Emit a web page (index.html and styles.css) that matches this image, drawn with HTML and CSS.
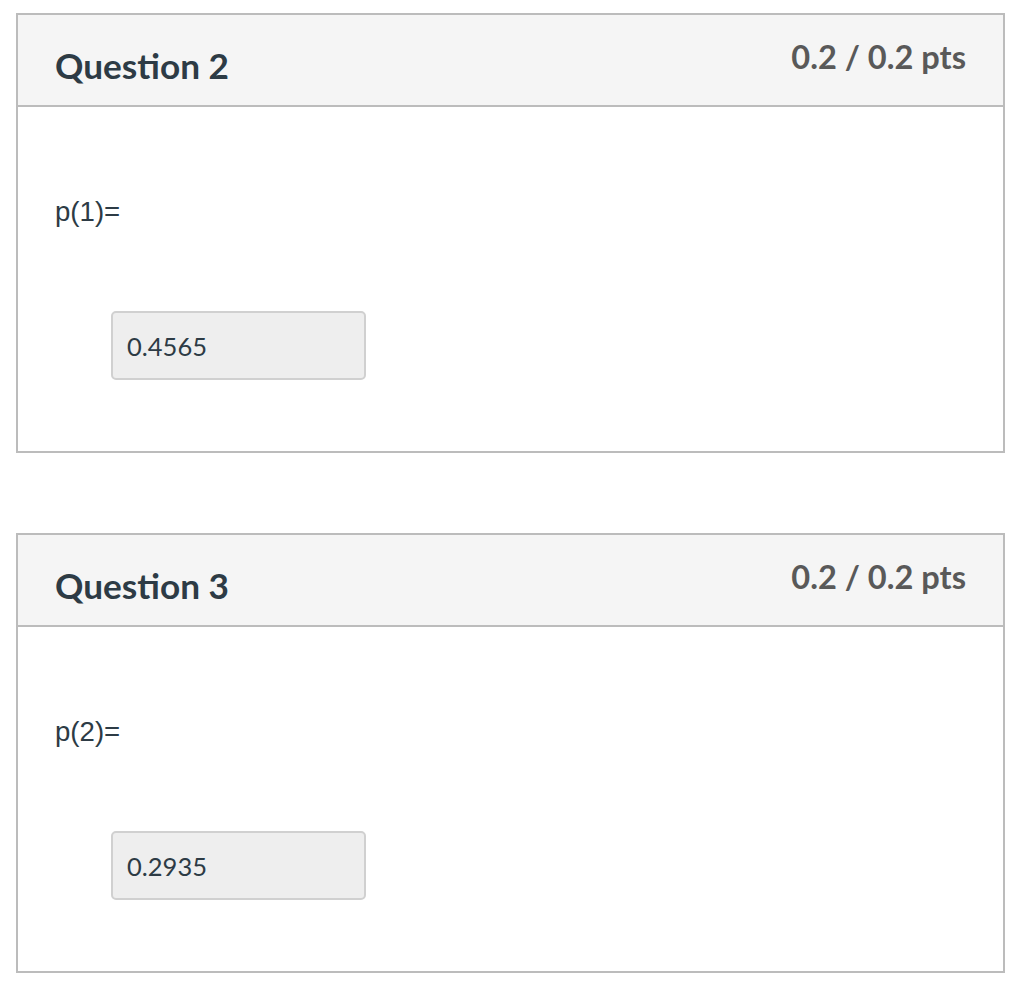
FILE: index.html
```html
<!DOCTYPE html>
<html lang="en">
<head>
<meta charset="utf-8">
<title>Quiz results</title>
<link rel="stylesheet" href="styles.css">
</head>
<body>
  <div class="question">
    <div class="question-header">
      <h2 class="question-name">Question 2</h2>
      <span class="question-points">0.2 / 0.2 pts</span>
    </div>
    <div class="question-body">
      <p class="question-text">p(1)=</p>
      <div class="answer-box">0.4565</div>
    </div>
  </div>
  <div class="question">
    <div class="question-header">
      <h2 class="question-name">Question 3</h2>
      <span class="question-points">0.2 / 0.2 pts</span>
    </div>
    <div class="question-body">
      <p class="question-text">p(2)=</p>
      <div class="answer-box">0.2935</div>
    </div>
  </div>
</body>
</html>
```

FILE: styles.css
```css
html, body {
  background: #ffffff;
}

body {
  margin: 0;
  padding: 13px 0 0 16px;
  display: flex;
  flex-direction: column;
  gap: 80px;
  font-family: Lato, "Liberation Sans", sans-serif;
  color: #2d3b45;
}

.question {
  box-sizing: border-box;
  width: 989px;
  border: 2px solid #bcbcbc;
  background: #ffffff;
}

.question-header {
  box-sizing: border-box;
  height: 92px;
  background: #f5f5f5;
  border-bottom: 2px solid #bcbcbc;
  padding: 0 37px;
  display: flex;
  justify-content: space-between;
  align-items: flex-start;
}

.question-name {
  margin: 29px 0 0 0;
  font-family: Lato, sans-serif;
  font-weight: 700;
  font-size: 35.2px;
  line-height: 43px;
  color: #2d3b45;
}

.question-points {
  margin-top: 23px;
  font-family: Lato, sans-serif;
  font-weight: 700;
  font-size: 32.6px;
  line-height: 38px;
  color: #595959;
}

.question-body {
  box-sizing: border-box;
  height: 344px;
  padding: 89px 37px 0 37px;
}

.question-text {
  margin: 0;
  font-family: "Liberation Sans", Arial, sans-serif;
  font-size: 27.6px;
  line-height: 32px;
  color: #2d3b45;
}

.answer-box {
  box-sizing: border-box;
  margin: 83px 0 0 56px;
  width: 255px;
  height: 69px;
  background: #eeeeee;
  border: 2px solid #d0d0d0;
  border-radius: 5px;
  padding-left: 14px;
  display: flex;
  align-items: center;
  font-family: Lato, sans-serif;
  font-size: 25.5px;
  line-height: 30px;
  color: #2d3b45;
}
```
